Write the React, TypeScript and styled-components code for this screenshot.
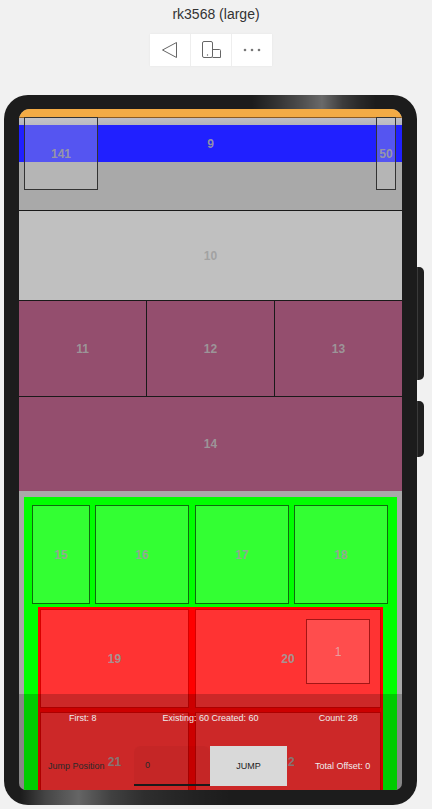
import React from "react";
import styled, { createGlobalStyle } from "styled-components";

const GlobalStyle = createGlobalStyle`
  html, body { margin: 0; padding: 0; }
  body {
    background: #f1f1f1;
    font-family: "Liberation Sans", Arial, sans-serif;
    width: 432px;
    height: 809px;
    overflow: hidden;
  }
`;

const Page = styled.div`
  display: flex;
  flex-direction: column;
  align-items: flex-start;
`;

const Title = styled.div`
  align-self: stretch;
  text-align: center;
  margin-top: 6px;
  font-size: 14px;
  line-height: 16px;
  color: #333;
`;

const Toolbar = styled.div`
  align-self: center;
  margin-top: 12px;
  margin-left: -11px;
  display: flex;
  height: 32px;
  background: #fff;
  box-shadow: 0 0 2px rgba(0, 0, 0, 0.06);
`;

const ToolCell = styled.div<{ $last?: boolean }>`
  width: 40px;
  height: 32px;
  display: flex;
  align-items: center;
  justify-content: center;
  border-right: ${(p) => (p.$last ? "none" : "1px solid #eeeeee")};
`;

const Phone = styled.div`
  position: relative;
  margin-top: 29px;
  margin-left: 4px;
  width: 413px;
  height: 710px;
  box-sizing: border-box;
  padding: 14px 15px 15px 15px;
  border-radius: 24px;
  background:
    linear-gradient(
        90deg,
        rgba(255, 255, 255, 0) 60%,
        rgba(255, 255, 255, 0.1) 66%,
        rgba(255, 255, 255, 0.22) 72%,
        rgba(255, 255, 255, 0.34) 77%,
        rgba(255, 255, 255, 0.14) 82%,
        rgba(255, 255, 255, 0.06) 86%,
        rgba(255, 255, 255, 0) 90%
      )
      top / 100% 14px no-repeat,
    linear-gradient(
        90deg,
        rgba(255, 255, 255, 0) 4%,
        rgba(255, 255, 255, 0.18) 10%,
        rgba(255, 255, 255, 0.32) 18%,
        rgba(255, 255, 255, 0.16) 26%,
        rgba(255, 255, 255, 0.08) 34%,
        rgba(255, 255, 255, 0.03) 45%,
        rgba(255, 255, 255, 0) 55%
      )
      bottom / 100% 15px no-repeat,
    #1c1c1c;
`;

const SideButton = styled.div<{ $top: number; $height: number }>`
  position: absolute;
  right: -7px;
  top: ${(p) => p.$top}px;
  width: 7px;
  height: ${(p) => p.$height}px;
  background: #1f1f1f;
  border-radius: 0 5px 5px 0;
  box-shadow: inset 1px 0 0 #3a3a3a;
`;

const Screen = styled.div`
  position: relative;
  width: 383px;
  height: 681px;
  overflow: hidden;
  border-radius: 11px 11px 7px 7px;
  background: #a9a9a9;
  display: flex;
  flex-direction: column;
`;

const OrangeBar = styled.div`
  flex: none;
  height: 8px;
  background: #f3ab45;
  border-bottom: 1px solid #8a5a22;
`;

const NineSection = styled.div`
  flex: none;
  height: 92px;
  box-sizing: border-box;
  padding-top: 7px;
  background: linear-gradient(to bottom, #bdbdc6 0, #b2b2ba 7px, #a9a9a9 7px, #a9a9a9 100%);
`;

const Label = styled.span`
  font-size: 12px;
  font-weight: bold;
  color: rgba(158, 158, 158, 0.9);
`;

const BlueBar = styled.div`
  height: 37px;
  background: #2020ff;
  display: flex;
  align-items: center;
  justify-content: center;
`;

const FloatBox = styled.div<{ $left: number; $width: number }>`
  position: absolute;
  top: 8px;
  left: ${(p) => p.$left}px;
  width: ${(p) => p.$width}px;
  height: 73px;
  box-sizing: border-box;
  border: 1px solid #333;
  background: rgba(209, 209, 209, 0.3);
  display: flex;
  align-items: center;
  justify-content: center;
`;

const Block = styled.div<{ $h: number; $bg: string }>`
  flex: none;
  height: ${(p) => p.$h}px;
  box-sizing: border-box;
  background: ${(p) => p.$bg};
  border-top: 1px solid #1a1a1a;
  display: flex;
  align-items: center;
  justify-content: center;
`;

const TripleRow = styled.div`
  flex: none;
  height: 96px;
  box-sizing: border-box;
  border-top: 1px solid #1a1a1a;
  display: grid;
  grid-template-columns: 127px 128px 128px;
  background: #944e6e;
`;

const Cell = styled.div<{ $first?: boolean }>`
  display: flex;
  align-items: center;
  justify-content: center;
  border-left: ${(p) => (p.$first ? "none" : "1px solid #1a1a1a")};
`;

const Green = styled.div`
  flex: none;
  margin: 6px 5px 0 5px;
  padding: 8px 9px 0 8px;
  background: #00ff00;
  display: flex;
  flex-direction: column;
`;

const GreenRow = styled.div`
  display: flex;
  height: 99px;
`;

const GreenItem = styled.div<{ $w: number; $ml: number }>`
  width: ${(p) => p.$w}px;
  margin-left: ${(p) => p.$ml}px;
  box-sizing: border-box;
  background: #33ff33;
  border: 1px solid #0f6a0f;
  display: flex;
  align-items: center;
  justify-content: center;
`;

const RedGrid = styled.div`
  margin-top: 3px;
  margin-left: 6px;
  width: 345px;
  box-sizing: border-box;
  padding: 2px;
  background: #ff0000;
  display: grid;
  grid-template-columns: 149px 186px;
  grid-auto-rows: 99px;
  column-gap: 6px;
  row-gap: 4px;
`;

const RedItem = styled.div`
  position: relative;
  box-sizing: border-box;
  background: #ff3333;
  border: 1px solid #d80000;
  display: flex;
  align-items: center;
  justify-content: center;
`;

const InnerBox = styled.div`
  position: absolute;
  left: 110px;
  top: 9px;
  width: 64px;
  height: 65px;
  box-sizing: border-box;
  background: #ff4d4d;
  border: 1px solid #a31515;
  display: flex;
  align-items: center;
  justify-content: center;
`;

const InnerLabel = styled.span`
  font-size: 12px;
  color: rgba(230, 170, 170, 0.9);
`;

const Overlay = styled.div`
  position: absolute;
  left: 0;
  right: 0;
  bottom: 0;
  height: 96px;
  background: rgba(0, 0, 0, 0.2);
  display: flex;
  flex-direction: column;
`;

const StatsRow = styled.div`
  height: 48px;
  display: flex;
  align-items: center;
`;

const Stat = styled.div`
  flex: 1;
  text-align: center;
  font-size: 9px;
  color: #eeeeee;
`;

const JumpRow = styled.div`
  margin-top: 4px;
  height: 40px;
  padding-left: 29px;
  display: flex;
  align-items: center;
`;

const JumpLabel = styled.div`
  width: 86px;
  font-size: 9px;
  color: #2a2a2a;
`;

const JumpInput = styled.input`
  width: 76px;
  height: 40px;
  box-sizing: border-box;
  margin: 0;
  padding: 0 0 0 11px;
  border: none;
  border-bottom: 2px solid #1a1a1a;
  border-radius: 6px 6px 0 0;
  background: rgba(0, 0, 0, 0.03);
  font-family: "Liberation Sans", Arial, sans-serif;
  font-size: 9px;
  color: #2a2a2a;
  outline: none;
`;

const JumpButton = styled.button`
  width: 77px;
  height: 40px;
  margin: 0;
  padding: 0;
  border: none;
  background: #d9d9d9;
  font-family: "Liberation Sans", Arial, sans-serif;
  font-size: 9px;
  color: #222222;
`;

const Offset = styled.div`
  margin-left: 28px;
  font-size: 9px;
  color: #eeeeee;
`;

export default function App() {
  return (
    <Page>
      <GlobalStyle />
      <Title>rk3568 (large)</Title>
      <Toolbar>
        <ToolCell>
          <svg width="20" height="20" viewBox="0 0 20 20">
            <path d="M16.5 2.5 L2.5 10 L16.5 17.5 Z" fill="none" stroke="#666" strokeWidth="1" strokeLinejoin="round" />
          </svg>
        </ToolCell>
        <ToolCell>
          <svg width="22" height="20" viewBox="0 0 22 20">
            <rect x="2.5" y="1.5" width="10" height="16" rx="1.5" fill="none" stroke="#666" strokeWidth="1" />
            <circle cx="7.5" cy="15" r="0.7" fill="#666" />
            <path d="M12.5 9.5 H19.5 A1 1 0 0 1 20.5 10.5 V17.5 H12.5" fill="none" stroke="#666" strokeWidth="1" />
          </svg>
        </ToolCell>
        <ToolCell $last>
          <svg width="22" height="20" viewBox="0 0 22 20">
            <circle cx="4" cy="10" r="1.3" fill="#777" />
            <circle cx="11" cy="10" r="1.3" fill="#777" />
            <circle cx="18" cy="10" r="1.3" fill="#777" />
          </svg>
        </ToolCell>
      </Toolbar>
      <Phone>
        <SideButton $top={172} $height={113} />
        <SideButton $top={306} $height={56} />
        <Screen>
          <OrangeBar />
          <NineSection>
            <BlueBar>
              <Label>9</Label>
            </BlueBar>
          </NineSection>
          <Block $h={90} $bg="#c0c0c0">
            <Label>10</Label>
          </Block>
          <TripleRow>
            <Cell $first>
              <Label>11</Label>
            </Cell>
            <Cell>
              <Label>12</Label>
            </Cell>
            <Cell>
              <Label>13</Label>
            </Cell>
          </TripleRow>
          <Block $h={95} $bg="#944e6e">
            <Label>14</Label>
          </Block>
          <Green>
            <GreenRow>
              <GreenItem $w={58} $ml={0}>
                <Label>15</Label>
              </GreenItem>
              <GreenItem $w={94} $ml={5}>
                <Label>16</Label>
              </GreenItem>
              <GreenItem $w={94} $ml={6}>
                <Label>17</Label>
              </GreenItem>
              <GreenItem $w={94} $ml={5}>
                <Label>18</Label>
              </GreenItem>
            </GreenRow>
            <RedGrid>
              <RedItem>
                <Label>19</Label>
              </RedItem>
              <RedItem>
                <Label>20</Label>
                <InnerBox>
                  <InnerLabel>1</InnerLabel>
                </InnerBox>
              </RedItem>
              <RedItem>
                <Label>21</Label>
              </RedItem>
              <RedItem>
                <Label>22</Label>
              </RedItem>
            </RedGrid>
          </Green>
          <FloatBox $left={5} $width={74}>
            <Label>141</Label>
          </FloatBox>
          <FloatBox $left={357} $width={20}>
            <Label>50</Label>
          </FloatBox>
          <Overlay>
            <StatsRow>
              <Stat>First: 8</Stat>
              <Stat>Existing: 60 Created: 60</Stat>
              <Stat>Count: 28</Stat>
            </StatsRow>
            <JumpRow>
              <JumpLabel>Jump Position</JumpLabel>
              <JumpInput defaultValue="0" readOnly />
              <JumpButton>JUMP</JumpButton>
              <Offset>Total Offset: 0</Offset>
            </JumpRow>
          </Overlay>
        </Screen>
      </Phone>
    </Page>
  );
}
